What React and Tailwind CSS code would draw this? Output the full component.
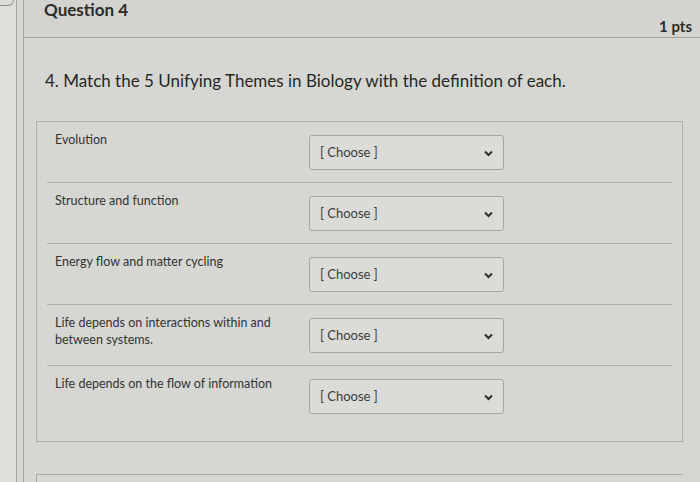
import React from "react";

const rows = [
  { label: "Evolution" },
  { label: "Structure and function" },
  { label: "Energy flow and matter cycling" },
  { label: "Life depends on interactions within and between systems." },
  { label: "Life depends on the flow of information" },
];

const ChooseSelect = () => (
  <div className="relative w-[195px] h-[35px] border border-[#a6a7a3] rounded-[3px] bg-[#dbdcd8] flex items-center pl-[10px] shrink-0">
    <span className="text-[13px] text-[#3b3c3a]">[ Choose ]</span>
    <svg
      className="absolute right-[10px] top-[14px]"
      width="9"
      height="7"
      viewBox="0 0 9 7"
      fill="none"
    >
      <path d="M1 1.5 L4.5 5 L8 1.5" stroke="#2e2f2d" strokeWidth="2" />
    </svg>
  </div>
);

export default function App() {
  return (
    <div className="w-[700px] h-[482px] overflow-hidden bg-[#d6d7d3] flex font-['Lato','Liberation_Sans',sans-serif] text-[#2c2d2b]">
      {/* left edge of the page */}
      <div className="w-[17px] shrink-0 bg-[#dedfdb] border-r border-[#a2a3a0] relative">
        <div className="absolute -top-[6px] left-0 w-[14px] h-[12px] border border-[#8f908c] border-l-0 rounded-r-full" />
      </div>
      <div className="w-[7px] shrink-0 border-r border-[#a2a3a0]" />

      {/* question panel */}
      <div className="flex-1 flex flex-col">
        <div className="h-[38px] border-b border-[#9fa09c] flex justify-between pl-[20px] pr-[8px] bg-[#d3d4d0]">
          <span className="text-[17px] font-bold leading-[18px] pt-[1px]">Question 4</span>
          <span className="text-[15px] font-bold leading-[18px] pt-[17px]">1 pts</span>
        </div>

        <p className="pl-[21px] mt-[31px] text-[17px] leading-[24px] text-[#262725]">
          4. Match the 5 Unifying Themes in Biology with the definition of each.
        </p>

        <div className="mt-[28px] ml-[12px] mr-[17px] h-[321px] border border-[#adaeaa] border-t-[#b3b4b0] px-[10px] pb-[20px]">
          {rows.map((r, i) => (
            <div
              key={i}
              className={
                "flex items-start pt-[8px] pb-[12px] px-[8px] " +
                (i < rows.length - 1 ? "border-b border-[#b1b2ae]" : "")
              }
            >
              <div className="w-[240px] text-[12.5px] leading-[17px] pt-[1px] text-[#333432] shrink-0">
                {r.label}
              </div>
              <div className="ml-[14px] mt-[5px]">
                <ChooseSelect />
              </div>
            </div>
          ))}
        </div>

        <div className="mt-[32px] ml-[12px] mr-[17px] flex-1 border-t border-l border-[#a9aaa6]" />
      </div>
    </div>
  );
}
